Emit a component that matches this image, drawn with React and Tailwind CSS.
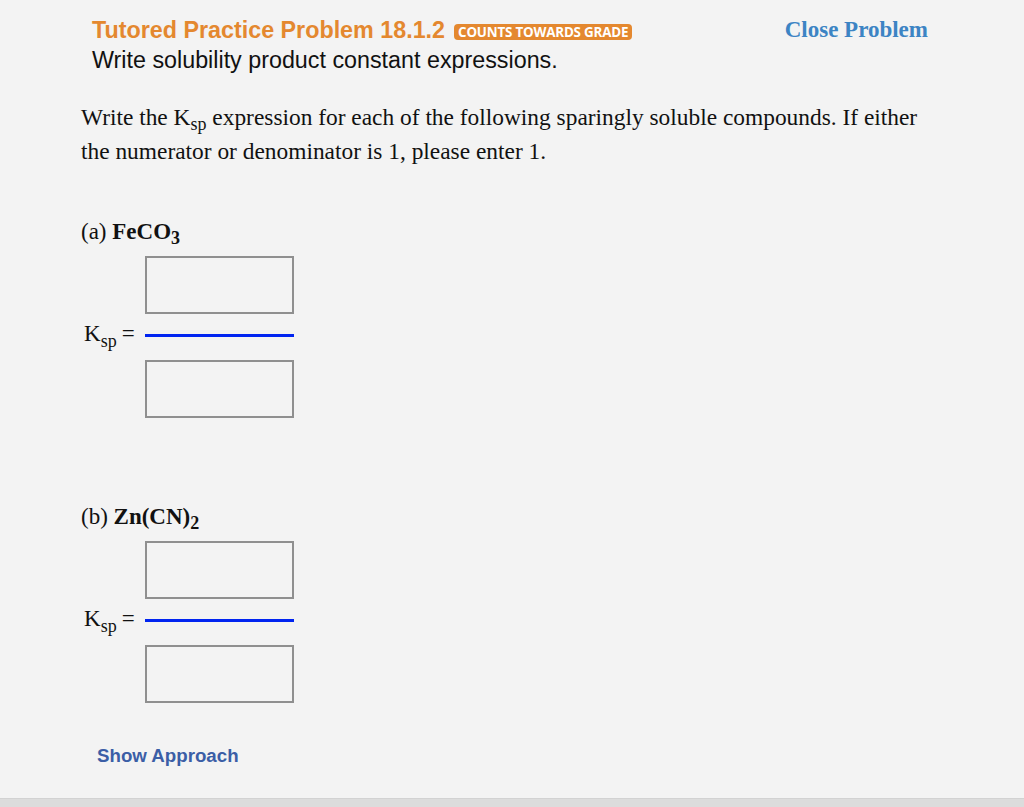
import React from 'react';

const serif = { fontFamily: '"Liberation Serif", "Times New Roman", serif' };

const AnswerBox = () => (
  <input
    type="text"
    className="w-[149px] h-[58px] border-2 border-[#8f8f8f] bg-[#f3f3f3] outline-none"
  />
);

const KspFraction = () => (
  <div className="flex items-center ml-[3px]">
    <div className="flex items-baseline text-[23px] text-[#111] w-[61px] pb-[6px]" style={serif}>
      <span>K</span>
      <span className="text-[18px] relative top-[6px]">sp</span>
      <span className="ml-[5px]">=</span>
    </div>
    <div className="flex flex-col">
      <AnswerBox />
      <div className="h-[3px] bg-[#0024f0] mt-[20px] mb-[23px]" />
      <AnswerBox />
    </div>
  </div>
);

const Part = ({ label, formula }) => (
  <div>
    <div className="text-[23px] text-[#111] leading-[30px]" style={serif}>
      {label} <span className="font-bold">{formula}</span>
    </div>
    <div className="mt-[9px]">
      <KspFraction />
    </div>
  </div>
);

export default function App() {
  return (
    <div className="min-h-[807px] bg-[#f3f3f3] flex flex-col" style={{ fontFamily: '"Liberation Sans", Arial, sans-serif' }}>
      <div className="flex-1 pl-[81px] pr-[96px]">
        {/* Header */}
        <div className="flex justify-between pt-[16px] pl-[11px]">
          <div>
            <div className="flex items-center gap-[9px]">
              <h1 className="text-[23.3px] font-bold text-[#e4882f] leading-[28px]">Tutored Practice Problem 18.1.2</h1>
              <span
                className="bg-[#e4882f] text-white text-[13.4px] font-bold rounded-[4px] px-[4px] leading-[16px] mt-[3px] tracking-[-0.2px]"
                style={{ fontFamily: '"Open Sans", sans-serif' }}
              >
                COUNTS TOWARDS GRADE
              </span>
            </div>
            <p className="text-[23.3px] text-[#111] leading-[28px] mt-[2px]">Write solubility product constant expressions.</p>
          </div>
          <a className="text-[23px] font-bold text-[#3c84c4] leading-[28px]" style={serif}>Close Problem</a>
        </div>

        {/* Instructions */}
        <p className="text-[23.4px] leading-[34px] text-[#111] mt-[26px]" style={serif}>
          Write the K<sub className="text-[18px]">sp</sub> expression for each of the following sparingly soluble compounds. If either
          <br />
          the numerator or denominator is 1, please enter 1.
        </p>

        <div className="mt-[49px]">
          <Part label="(a)" formula={<>FeCO<sub className="text-[18px]">3</sub></>} />
        </div>
        <div className="mt-[84px]">
          <Part label="(b)" formula={<>Zn(CN)<sub className="text-[18px]">2</sub></>} />
        </div>

        <div className="mt-[39px] pl-[16px]">
          <a className="text-[18.7px] font-bold text-[#3b5ea6]">Show Approach</a>
        </div>
      </div>
      <div className="h-[9px] bg-[#dcdcdc] border-t border-[#d2d2d2]" />
    </div>
  );
}
